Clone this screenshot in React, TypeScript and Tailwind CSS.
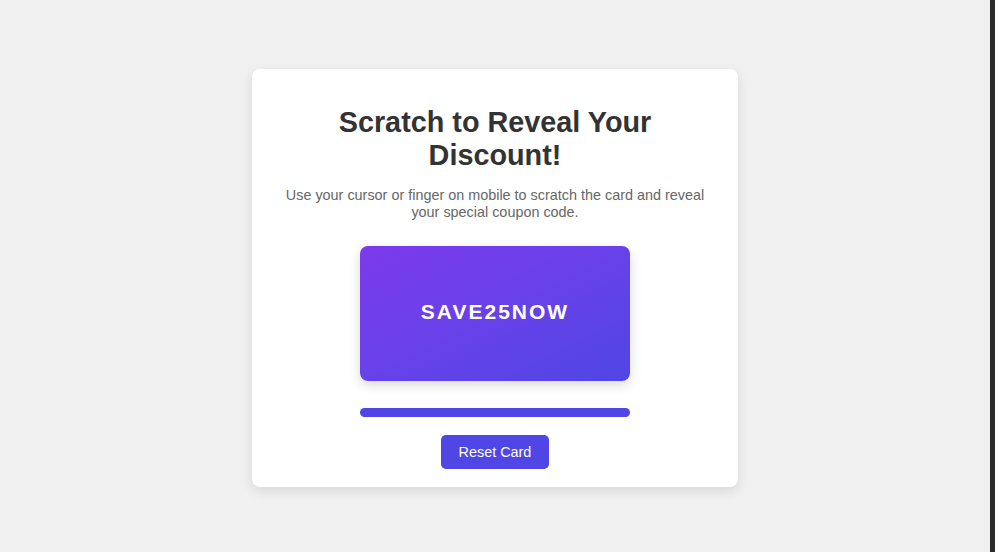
import React from "react";

export default function App() {
  return (
    <div className="flex h-[552px] w-full overflow-hidden bg-[#f0f0f0] font-['Liberation_Sans',Arial,sans-serif]">
      <div className="flex flex-1 justify-center pt-[69px]">
        <div className="flex h-[418px] w-[486px] flex-col items-center rounded-lg bg-white px-8 pt-[37px] pb-[18px] shadow-[0_4px_12px_rgba(0,0,0,0.1)]">
          <h1 className="text-center text-[28.8px] font-bold leading-[1.15] text-[#333]">
            Scratch to Reveal Your Discount!
          </h1>
          <p className="mt-[15px] text-center text-[14.4px] leading-[1.15] text-[#666]">
            Use your cursor or finger on mobile to scratch the card and reveal your special coupon code.
          </p>
          <div className="mt-[26px] flex h-[135px] w-[270px] items-center justify-center rounded-lg bg-gradient-to-br from-[#7c3aed] to-[#4f46e5] pb-[3px] shadow-[0_4px_12px_rgba(0,0,0,0.15)]">
            <span className="text-[21px] font-bold tracking-[2px] text-white">SAVE25NOW</span>
          </div>
          <div className="mt-[27px] h-[9px] w-[270px] rounded-full bg-[#4f46e5]" />
          <button className="mt-[18px] h-[34px] rounded-[5px] bg-[#4f46e5] px-[18px] pt-[2px] text-[14.4px] text-white">
            Reset Card
          </button>
        </div>
      </div>
      <div className="h-full w-[5px] bg-[#2b2b2b]" />
    </div>
  );
}
